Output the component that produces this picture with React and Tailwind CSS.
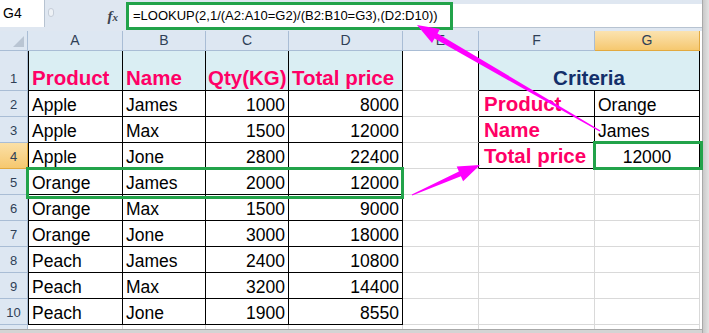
import React from 'react';

// Spreadsheet screenshot: LOOKUP formula with criteria table
const colLetters = ['A', 'B', 'C', 'D', 'E', 'F', 'G'];

const rows = [
  ['Apple', 'James', 1000, 8000],
  ['Apple', 'Max', 1500, 12000],
  ['Apple', 'Jone', 2800, 22400],
  ['Orange', 'James', 2000, 12000],
  ['Orange', 'Max', 1500, 9000],
  ['Orange', 'Jone', 3000, 18000],
  ['Peach', 'James', 2400, 10800],
  ['Peach', 'Max', 3200, 14400],
  ['Peach', 'Jone', 1900, 8550],
];

const criteria = [
  ['Product', 'Orange'],
  ['Name', 'James'],
  ['Total price', '12000'],
];

const grid = 'border-r border-b border-[#d9d9d9]';
const boxed = 'border-r border-b border-black';
const data = 'flex items-end pb-px text-[17.5px] leading-[20px] text-black';
const label = 'flex items-end text-[20.5px] font-bold leading-[24px] text-[#ff0066]';

function ColHeader({ letter }) {
  const active = letter === 'G';
  return (
    <div
      className={
        active
          ? 'flex items-center justify-center border-r border-b border-[#e2a93f] bg-gradient-to-b from-[#fbe3b0] to-[#f6c86f] text-[14px] text-[#2f3f56]'
          : 'flex items-center justify-center border-r border-b border-[#a9bdd5] bg-[#dde7f2] text-[14px] text-[#2f3f56]'
      }
    >
      {letter}
    </div>
  );
}

function RowHeader({ n }) {
  return (
    <div
      className={
        n === 4
          ? 'flex items-end justify-center border-r border-b border-[#e2a93f] bg-gradient-to-b from-[#fbe0a6] to-[#f6c86f] pb-[3px] text-[13px] leading-[16px] text-[#2f3f56]'
          : 'flex items-end justify-center border-r border-b border-[#a9bdd5] bg-[#dde7f2] pb-[3px] text-[13px] leading-[16px] text-[#2f3f56]'
      }
    >
      {n}
    </div>
  );
}

function FormulaBar() {
  return (
    <div className="flex h-[31px] bg-[#dfe7f1]">
      <div className="flex h-[27px] w-[45px] items-center border-r border-[#b7c3d1] bg-white pl-[3px] text-[14px] text-black">
        G4
      </div>
      <div className="flex w-[81px] items-start pt-[8px]">
        <div className="ml-[3px] h-[9px] w-[6px] rounded-[3px] border border-[#c5cdd8] bg-[#eef2f6]" />
        <span className="ml-auto mr-[8px] mt-[1px] font-['Liberation_Serif',serif] text-[15px] font-bold italic leading-[14px] text-[#3b4350]">
          f<span className="text-[11px]">x</span>
        </span>
      </div>
      <div className="mt-[4px] flex h-[24px] flex-1 items-center border-b border-[#b7c3d1] bg-white pl-[7px] text-[13px] text-black">
        =LOOKUP(2,1/(A2:A10=G2)/(B2:B10=G3),(D2:D10))
      </div>
    </div>
  );
}

function Sheet() {
  return (
    <div className="grid grid-cols-[28px_95px_83px_83px_114px_76px_116px_105px] grid-rows-[20px_40px_repeat(10,26px)]">
      {/* corner */}
      <div className="relative border-r border-b border-[#a9bdd5] bg-[#dde7f2]">
        <svg className="absolute bottom-[3px] right-[3px]" width="11" height="11" viewBox="0 0 11 11">
          <polygon points="11,0 11,11 0,11" fill="#b9c5d3" />
        </svg>
      </div>
      {colLetters.map((l) => (
        <ColHeader key={l} letter={l} />
      ))}

      {/* row 1 */}
      <RowHeader n={1} />
      <div className={`${label} ${boxed} border-l bg-[#daeef3] pl-[3px]`}>Product</div>
      <div className={`${label} ${boxed} bg-[#daeef3] pl-[3px]`}>Name</div>
      <div className={`${label} ${boxed} bg-[#daeef3] pl-[2px]`}>Qty(KG)</div>
      <div className={`${label} ${boxed} bg-[#daeef3] pl-[3px]`}>Total price</div>
      <div className="border-r border-b border-r-black border-b-[#d9d9d9]" />
      <div className={`${boxed} col-span-2 flex items-end justify-center bg-[#daeef3] text-[20.5px] font-bold leading-[24px] text-[#132f6a]`}>
        Criteria
      </div>

      {/* rows 2-10 */}
      {rows.map((r, i) => {
        const n = i + 2;
        const crit = criteria[i];
        return (
          <React.Fragment key={n}>
            <RowHeader n={n} />
            <div className={`${data} ${boxed} border-l pl-[3px]`}>{r[0]}</div>
            <div className={`${data} ${boxed} pl-[3px]`}>{r[1]}</div>
            <div className={`${data} ${boxed} justify-end pr-[3px]`}>{r[2]}</div>
            <div className={`${data} ${boxed} justify-end pr-[3px]`}>{r[3]}</div>
            <div
              className={
                crit
                  ? 'border-r border-b border-r-black border-b-[#d9d9d9]'
                  : grid
              }
            />
            {crit ? (
              <>
                <div className={`${label} ${boxed} pl-[5px]`}>{crit[0]}</div>
                <div className={`${data} ${boxed} ${n === 4 ? 'justify-center' : 'pl-[3px]'}`}>{crit[1]}</div>
              </>
            ) : (
              <>
                <div className={grid} />
                <div className={grid} />
              </>
            )}
          </React.Fragment>
        );
      })}

      {/* row 11, cut off by the window edge */}
      <div className="border-r border-[#a9bdd5] bg-[#dde7f2]" />
      <div className={grid} />
      <div className={grid} />
      <div className={grid} />
      <div className={grid} />
      <div className={grid} />
      <div className={grid} />
      <div className={grid} />
    </div>
  );
}

export default function App() {
  return (
    <div className="relative flex h-[333px] w-[709px] overflow-hidden bg-white font-['Liberation_Sans',Arial,sans-serif]">
      <div className="flex w-[702px] flex-col">
        <FormulaBar />
        <div className="h-[298px] overflow-hidden">
          <Sheet />
        </div>
        <div className="h-[4px] border-t border-[#a9a9a9] bg-[#d4d4d4]" />
      </div>
      <div className="w-[7px] border-l border-[#a9a9a9] bg-gradient-to-r from-[#c9c9c9] to-[#e3e3e3]" />

      {/* highlight boxes */}
      <div className="absolute left-[126px] top-[2px] h-[28px] w-[327px] border-[3px] border-[#22a34a]" />
      <div className="absolute left-[26px] top-[167px] h-[32px] w-[378px] border-[3px] border-[#22a34a]" />
      <div className="absolute left-[593px] top-[141px] h-[29px] w-[110px] border-[3px] border-[#22a34a]" />

      {/* arrows */}
      <svg className="pointer-events-none absolute left-0 top-0" width="709" height="333" viewBox="0 0 709 333">
        <polygon
          fill="#ff00ff"
          points="417,25 440,29.1 437.5,33.4 600.4,130.4 599.6,131.6 434.5,38.6 432,42.9"
        />
        <polygon
          fill="#ff00ff"
          points="480,165 463.1,181.2 460.9,176.2 412.2,195.6 411.8,194.4 458.9,171.6 456.7,166.6"
        />
      </svg>
    </div>
  );
}
